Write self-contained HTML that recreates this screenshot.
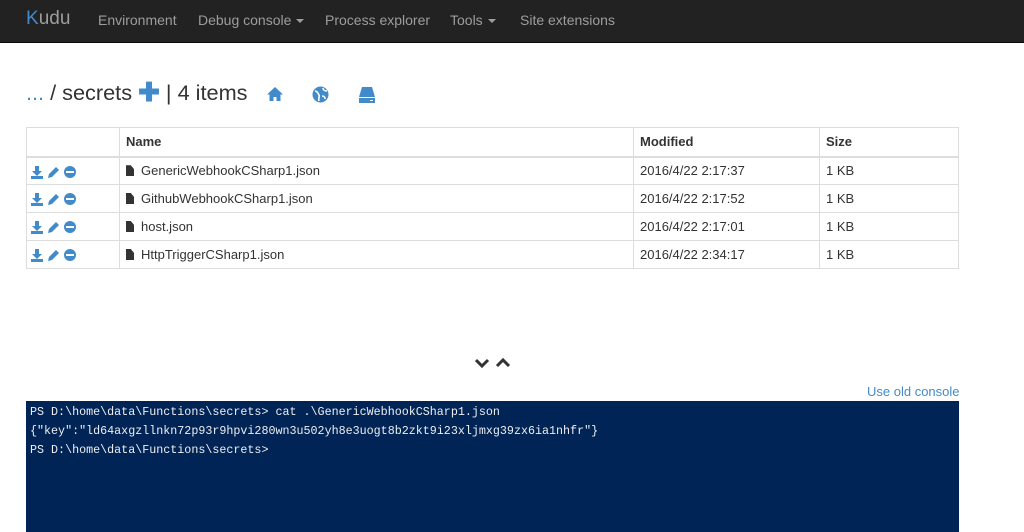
<!DOCTYPE html>
<html><head><meta charset="utf-8"><style>
*{box-sizing:border-box;margin:0;padding:0}
body{width:1024px;height:532px;overflow:hidden;background:#fff;font-family:"Liberation Sans",sans-serif;color:#333;position:relative}
.nav{position:absolute;left:0;top:0;width:1024px;height:43px;background:#222;border-bottom:1px solid #080808}
.nav span{position:absolute;top:12px;font-size:14px;color:#9d9d9d}
.brand{font-size:19px!important;top:8px!important}
.caret{display:inline-block;width:0;height:0;border-left:4px solid transparent;border-right:4px solid transparent;border-top:4px solid #9d9d9d;vertical-align:middle;margin-left:5px}
.title{position:absolute;left:26px;top:77px;font-size:21.7px;color:#333}
.title .dots{color:#428bca}
table{position:absolute;left:26px;top:127px;width:933px;border-collapse:collapse;font-size:13px}
td,th{border:1px solid #ddd;height:28px;padding:0 6px;text-align:left}
th{font-weight:bold;height:29px;border-bottom:2px solid #ddd}
.doc{display:inline-block;width:8px;height:11px;background:#333;margin-right:7px;vertical-align:-1px;clip-path:polygon(0 0,60% 0,100% 35%,100% 100%,0 100%)}
td.ic{padding:0 4px}
td.ic svg{vertical-align:middle}
.con{position:absolute;left:26px;top:401px;width:933px;height:131px;background:#012456;color:#eee;font-family:"Liberation Mono",monospace;font-size:11.7px;line-height:19px;padding:2px 4px;white-space:pre}
</style></head><body>
<div class="nav">
<span class="brand" style="left:26px"><span style="position:static;color:#428bca;font-size:19px">K</span>udu</span>
<span style="left:98px">Environment</span>
<span style="left:198px">Debug console<i class="caret"></i></span>
<span style="left:325px">Process explorer</span>
<span style="left:450px">Tools<i class="caret"></i></span>
<span style="left:520px">Site extensions</span>
</div>
<div class="title"><span class="dots">...</span> / secrets <span style="color:#428bca;font-weight:bold;font-size:26px;vertical-align:-1px">✚</span> | 4 items</div>
<svg style="position:absolute;left:266px;top:86px" width="18" height="16" viewBox="0 0 18 16"><path d="M9 1L1 8.5h2.5V15h4v-4h3v4h4V8.5H17z" fill="#428bca"/></svg>
<svg style="position:absolute;left:312px;top:86px" width="17" height="17" viewBox="0 0 17 17"><circle cx="8.5" cy="8.5" r="8" fill="#428bca"/><path d="M3 5c2 0 3 2 4 4s-1 3 0 6M11 2c0 2 2 3 4 3M10 10c2 0 3 1 3 3" stroke="#fff" stroke-width="1.6" fill="none"/></svg>
<svg style="position:absolute;left:358px;top:86px" width="18" height="17" viewBox="0 0 18 17"><path d="M4 1h10l3 10H1z" fill="#428bca"/><rect x="1" y="12" width="16" height="5" fill="#428bca"/><rect x="12" y="14" width="3" height="1" fill="#fff"/></svg>
<table>
<tr><th style="width:93px"></th><th style="width:514px">Name</th><th style="width:186px">Modified</th><th>Size</th></tr>
<tr><td class="ic"><svg width="46" height="14" viewBox="0 0 46 14"><path d="M4 1h4v5h3L6 11 1 6h3z" fill="#428bca"/><rect x="0" y="11" width="12" height="3" fill="#428bca"/><path d="M17 13l1-4 7-7 3 3-7 7z" fill="#428bca"/><circle cx="39" cy="7" r="6" fill="#428bca"/><rect x="35" y="6" width="8" height="2" fill="#fff"/></svg></td><td><i class="doc"></i>GenericWebhookCSharp1.json</td><td>2016/4/22 2:17:37</td><td>1 KB</td></tr>
<tr><td class="ic"><svg width="46" height="14" viewBox="0 0 46 14"><path d="M4 1h4v5h3L6 11 1 6h3z" fill="#428bca"/><rect x="0" y="11" width="12" height="3" fill="#428bca"/><path d="M17 13l1-4 7-7 3 3-7 7z" fill="#428bca"/><circle cx="39" cy="7" r="6" fill="#428bca"/><rect x="35" y="6" width="8" height="2" fill="#fff"/></svg></td><td><i class="doc"></i>GithubWebhookCSharp1.json</td><td>2016/4/22 2:17:52</td><td>1 KB</td></tr>
<tr><td class="ic"><svg width="46" height="14" viewBox="0 0 46 14"><path d="M4 1h4v5h3L6 11 1 6h3z" fill="#428bca"/><rect x="0" y="11" width="12" height="3" fill="#428bca"/><path d="M17 13l1-4 7-7 3 3-7 7z" fill="#428bca"/><circle cx="39" cy="7" r="6" fill="#428bca"/><rect x="35" y="6" width="8" height="2" fill="#fff"/></svg></td><td><i class="doc"></i>host.json</td><td>2016/4/22 2:17:01</td><td>1 KB</td></tr>
<tr><td class="ic"><svg width="46" height="14" viewBox="0 0 46 14"><path d="M4 1h4v5h3L6 11 1 6h3z" fill="#428bca"/><rect x="0" y="11" width="12" height="3" fill="#428bca"/><path d="M17 13l1-4 7-7 3 3-7 7z" fill="#428bca"/><circle cx="39" cy="7" r="6" fill="#428bca"/><rect x="35" y="6" width="8" height="2" fill="#fff"/></svg></td><td><i class="doc"></i>HttpTriggerCSharp1.json</td><td>2016/4/22 2:34:17</td><td>1 KB</td></tr>
</table>
<svg style="position:absolute;left:475px;top:357px" width="36" height="12" viewBox="0 0 36 12"><path d="M1 3l6 6 6-6" stroke="#333" stroke-width="3" fill="none"/><path d="M22 9l6-6 6 6" stroke="#333" stroke-width="3" fill="none"/></svg>
<div style="position:absolute;left:867px;top:384px;font-size:13px;color:#428bca">Use old console</div>
<div class="con">PS D:\home\data\Functions\secrets&gt; cat .\GenericWebhookCSharp1.json
{"key":"ld64axgzllnkn72p93r9hpvi280wn3u502yh8e3uogt8b2zkt9i23xljmxg39zx6ia1nhfr"}
PS D:\home\data\Functions\secrets&gt;</div>
</body></html>
